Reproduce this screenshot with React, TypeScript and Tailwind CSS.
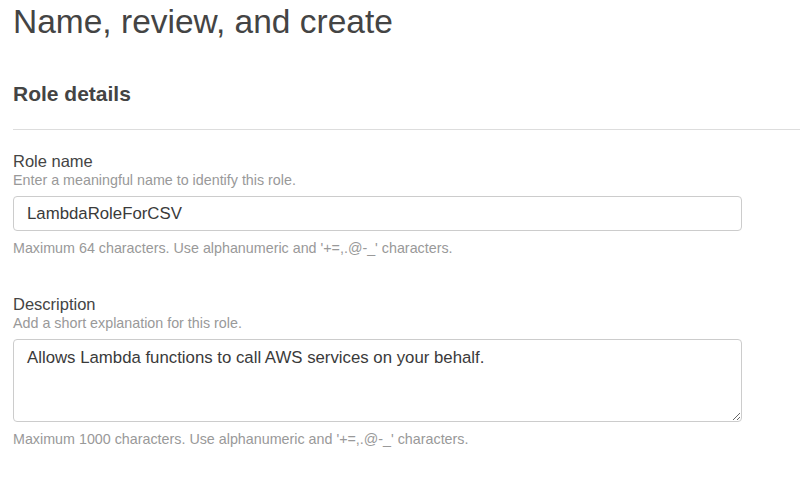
import React from 'react';

const font = { fontFamily: '"Liberation Sans", Arial, sans-serif' };

const Field: React.FC<{
  label: string;
  hint: string;
  note: string;
  children: React.ReactNode;
}> = ({ label, hint, note, children }) => (
  <div>
    <div className="text-[16.5px] leading-[20px] text-[#444]">{label}</div>
    <div className="mt-[1px] text-[14.3px] leading-[17px] text-[#999]">{hint}</div>
    <div className="mt-[7px]">{children}</div>
    <div className="mt-[8px] text-[14.3px] leading-[18px] text-[#999]">{note}</div>
  </div>
);

export default function App() {
  return (
    <div className="w-[800px] h-[489px] overflow-hidden bg-white pl-[13px] pt-[3px]" style={font}>
      <h1 className="text-[33.5px] leading-[38px] text-[#444]">Name, review, and create</h1>

      <h2 className="mt-[41px] text-[21px] leading-[24px] font-bold text-[#444]">Role details</h2>
      <div className="mt-[23px] border-t border-[#ddd]" />

      <div className="mt-[21px] flex flex-col gap-[37px]">
        <Field
          label="Role name"
          hint="Enter a meaningful name to identify this role."
          note="Maximum 64 characters. Use alphanumeric and '+=,.@-_' characters."
        >
          <input
            readOnly
            value="LambdaRoleForCSV"
            className="block w-[729px] h-[35px] rounded-[4px] border border-[#ccc] px-[13px] text-[16.8px] text-[#3a3a3a] outline-none"
            style={font}
          />
        </Field>

        <Field
          label="Description"
          hint="Add a short explanation for this role."
          note="Maximum 1000 characters. Use alphanumeric and '+=,.@-_' characters."
        >
          <textarea
            readOnly
            defaultValue="Allows Lambda functions to call AWS services on your behalf."
            className="block w-[729px] h-[83px] rounded-[4px] border border-[#ccc] px-[13px] py-[8px] text-[16.8px] leading-[20px] text-[#3a3a3a] outline-none"
            style={font}
          />
        </Field>
      </div>
    </div>
  );
}
